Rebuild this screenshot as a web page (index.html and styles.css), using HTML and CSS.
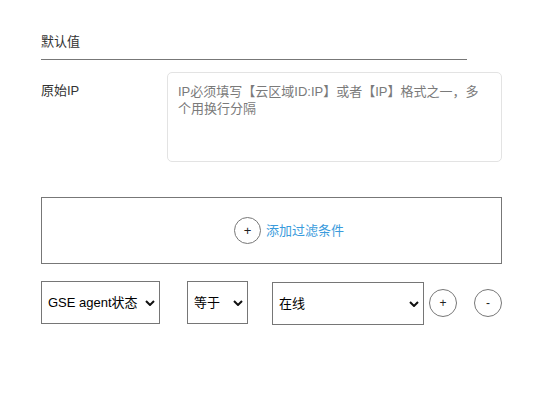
FILE: index.html
```html
<!DOCTYPE html>
<html lang="zh">
<head>
<meta charset="utf-8">
<link rel="stylesheet" href="styles.css">
</head>
<body>
<div class="page">
  <div class="section-title">默认值</div>
  <div class="field-row">
    <label class="field-label">原始IP</label>
    <textarea class="ip-input" placeholder="IP必须填写【云区域ID:IP】或者【IP】格式之一，多个用换行分隔"></textarea>
  </div>
  <div class="filter-box">
    <span class="circle-btn add-btn">+</span>
    <span class="add-text">添加过滤条件</span>
  </div>
  <div class="cond-row">
    <div class="sel sel-field">
      <select><option>GSE agent状态</option></select>
      <svg class="chev" viewBox="0 0 10 6" width="10" height="6"><path d="M1 1 L5 5 L9 1" fill="none" stroke="#111" stroke-width="2"/></svg>
    </div>
    <div class="sel sel-op">
      <select><option>等于</option></select>
      <svg class="chev" viewBox="0 0 10 6" width="10" height="6"><path d="M1 1 L5 5 L9 1" fill="none" stroke="#111" stroke-width="2"/></svg>
    </div>
    <div class="sel sel-val">
      <select><option>在线</option></select>
      <svg class="chev" viewBox="0 0 10 6" width="10" height="6"><path d="M1 1 L5 5 L9 1" fill="none" stroke="#111" stroke-width="2"/></svg>
    </div>
    <span class="circle-btn small plus">+</span>
    <span class="circle-btn small minus">-</span>
  </div>
</div>
</body>
</html>
```
FILE: styles.css
```css
* { box-sizing: border-box; }
html, body { margin: 0; padding: 0; background: #fff; }
body {
  font-family: "Liberation Sans", "Noto Sans CJK SC", sans-serif;
  font-size: 13px;
  line-height: 20px;
  color: #333;
}
.page {
  padding: 32px 0 0 41px;
  width: 502px;
}
.section-title {
  width: 426px;
  padding-bottom: 7px;
  border-bottom: 1px solid #777;
}
.field-row {
  display: flex;
  margin-top: 12px;
}
.field-label {
  width: 126px;
  padding-top: 9px;
}
.ip-input {
  width: 335px;
  height: 90px;
  border: 1px solid #e3e3e3;
  border-radius: 5px;
  padding: 10px 10px;
  font: inherit;
  line-height: 17px;
  resize: none;
  outline: none;
}
.ip-input::placeholder { color: #7a7a7a; }
.filter-box {
  margin-top: 35px;
  height: 67px;
  border: 1px solid #777;
  display: flex;
  align-items: center;
  padding-left: 192px;
}
.circle-btn {
  display: inline-flex;
  align-items: center;
  justify-content: center;
  border: 1px solid #777;
  border-radius: 50%;
  color: #222;
  font-size: 13px;
  flex: none;
}
.add-btn { width: 27px; height: 27px; }
.add-text { margin-left: 5px; color: #3a9bdc; }
.cond-row {
  display: flex;
  align-items: center;
  margin-top: 16px;
}
.sel { position: relative; flex: none; }
.sel select {
  appearance: none;
  -webkit-appearance: none;
  width: 100%;
  height: 43px;
  border: 1px solid #767676;
  border-radius: 0;
  background: #fff;
  font-family: "Liberation Sans", "Noto Sans CJK SC", sans-serif;
  font-size: 13px;
  color: #000;
  padding: 0 0 0 6px;
  outline: none;
}
.chev { position: absolute; right: 5px; top: 19px; pointer-events: none; }
.sel-field { width: 119px; }
.sel-op { width: 61px; margin-left: 27px; }
.sel-val { width: 152px; margin-left: 24px; margin-top: 2px; }
.sel-val .chev { top: 19px; }
.circle-btn.small { width: 28px; height: 28px; font-size: 12px; }
.plus { margin-left: 5px; }
.minus { margin-left: 17px; }
```
